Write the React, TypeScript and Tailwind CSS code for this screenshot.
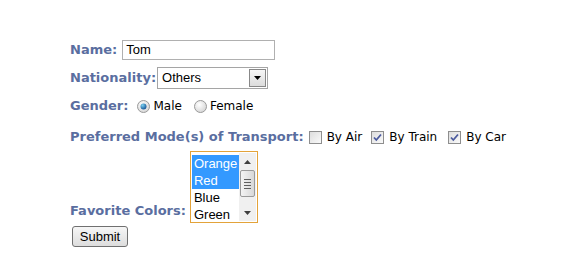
import React from 'react'

const label = 'font-["DejaVu_Sans",Verdana,sans-serif] font-bold text-[13px] text-[#5a6ea0] whitespace-nowrap'
const ctrl = 'font-["Liberation_Sans",Arial,sans-serif] text-[13px] text-black'
const opt = 'font-["DejaVu_Sans",Verdana,sans-serif] text-[12px] text-black whitespace-nowrap'

function Radio({ checked }: { checked?: boolean }) {
  return (
    <svg width="13" height="13" viewBox="0 0 13 13" className="shrink-0">
      <defs>
        <radialGradient id="rb" cx="40%" cy="35%" r="70%">
          <stop offset="0" stopColor="#ffffff" />
          <stop offset="1" stopColor="#d4d4d4" />
        </radialGradient>
        <radialGradient id="rd" cx="35%" cy="30%" r="70%">
          <stop offset="0" stopColor="#7ad0f0" />
          <stop offset="1" stopColor="#1a5a9a" />
        </radialGradient>
      </defs>
      <circle cx="6.5" cy="6.5" r="6" fill="url(#rb)" stroke="#9a9a9a" />
      {checked && <circle cx="6.5" cy="6.5" r="3" fill="url(#rd)" />}
    </svg>
  )
}

function Check({ checked }: { checked?: boolean }) {
  return (
    <svg width="13" height="13" viewBox="0 0 13 13" className="shrink-0">
      <defs>
        <linearGradient id="cb" x1="0" y1="0" x2="1" y2="1">
          <stop offset="0" stopColor="#dcdcdc" />
          <stop offset="1" stopColor="#fbfbfb" />
        </linearGradient>
      </defs>
      <rect x="0.5" y="0.5" width="12" height="12" fill="url(#cb)" stroke="#8e8e8e" />
      {checked && (
        <path d="M3 6.5 L5.3 9 L10 3.5" fill="none" stroke="#4b5a9e" strokeWidth="1.8" />
      )}
    </svg>
  )
}

function ListBox() {
  const items = ['Orange', 'Red', 'Blue', 'Green']
  return (
    <div className="flex h-[72px] w-[68px] border border-[#e3a33a] bg-white p-px">
      <div className={`${ctrl} flex-1 pt-[2px]`}>
        {items.map((c, i) => (
          <div
            key={c}
            className={`h-[17px] pl-[2px] leading-[17px] ${i < 2 ? 'bg-[#3399ff] text-white' : ''}`}
          >
            {c}
          </div>
        ))}
      </div>
      <div className="flex w-[17px] flex-col bg-[#f0f0f0]">
        <div className="flex h-[17px] items-center justify-center">
          <svg width="7" height="4" viewBox="0 0 7 4">
            <path d="M0 4 L3.5 0 L7 4 Z" fill="#404040" />
          </svg>
        </div>
        <div className="mx-px flex h-[27px] flex-col items-center justify-center gap-[2px] rounded-[2px] border border-[#9a9a9a] bg-gradient-to-r from-[#f4f4f4] to-[#d8d8d8]">
          <div className="h-px w-[7px] bg-[#606060]" />
          <div className="h-px w-[7px] bg-[#606060]" />
          <div className="h-px w-[7px] bg-[#606060]" />
          <div className="h-px w-[7px] bg-[#606060]" />
        </div>
        <div className="flex-1" />
        <div className="flex h-[17px] items-center justify-center">
          <svg width="7" height="4" viewBox="0 0 7 4">
            <path d="M0 0 L3.5 4 L7 0 Z" fill="#404040" />
          </svg>
        </div>
      </div>
    </div>
  )
}

export default function App() {
  return (
    <main className="h-[274px] w-[578px] bg-white">
      <form className="flex flex-col pl-[70px] pt-[40px]">
        <div className="flex h-[20px] items-center gap-[5px]">
          <span className={label}>Name:</span>
          <div className={`${ctrl} flex h-[20px] w-[153px] items-center border border-[#b0b0b0] px-[3px]`}>Tom</div>
        </div>

        <div className="mt-[7px] flex h-[22px] items-center gap-[1px]">
          <span className={label}>Nationality:</span>
          <div className={`${ctrl} flex h-[22px] w-[111px] items-center border border-[#a5a5a5] pl-[4px]`}>
            <span className="flex-1">Others</span>
            <div className="mr-px flex h-[18px] w-[17px] items-center justify-center border border-[#888] bg-gradient-to-b from-[#f6f6f6] to-[#dcdcdc]">
              <svg width="7" height="4" viewBox="0 0 7 4">
                <path d="M0 0 L3.5 4 L7 0 Z" fill="#000" />
              </svg>
            </div>
          </div>
        </div>

        <div className="mt-[7px] flex h-[20px] items-center">
          <span className={`${label} mr-[9px]`}>Gender:</span>
          <Radio checked />
          <span className={`${opt} ml-[3px] mr-[12px]`}>Male</span>
          <Radio />
          <span className={`${opt} ml-[3px]`}>Female</span>
        </div>

        <div className="mt-[11px] flex h-[20px] items-center">
          <span className={`${label} mr-[5px]`}>Preferred Mode(s) of Transport:</span>
          <Check />
          <span className={`${opt} ml-[5px] mr-[9px]`}>By Air</span>
          <Check checked />
          <span className={`${opt} ml-[5px] mr-[11px]`}>By Train</span>
          <Check checked />
          <span className={`${opt} ml-[5px]`}>By Car</span>
        </div>

        <div className="mt-[4px] flex items-end gap-[4px]">
          <span className={`${label} pb-[3px]`}>Favorite Colors:</span>
          <ListBox />
        </div>

        <div className="mt-[3px] flex">
          <button
            type="button"
            className={`${ctrl} ml-[2px] h-[21px] w-[56px] rounded-[3px] border border-[#707070] bg-gradient-to-b from-[#f6f6f6] to-[#dddddd] leading-none`}
          >
            Submit
          </button>
        </div>
      </form>
    </main>
  )
}
